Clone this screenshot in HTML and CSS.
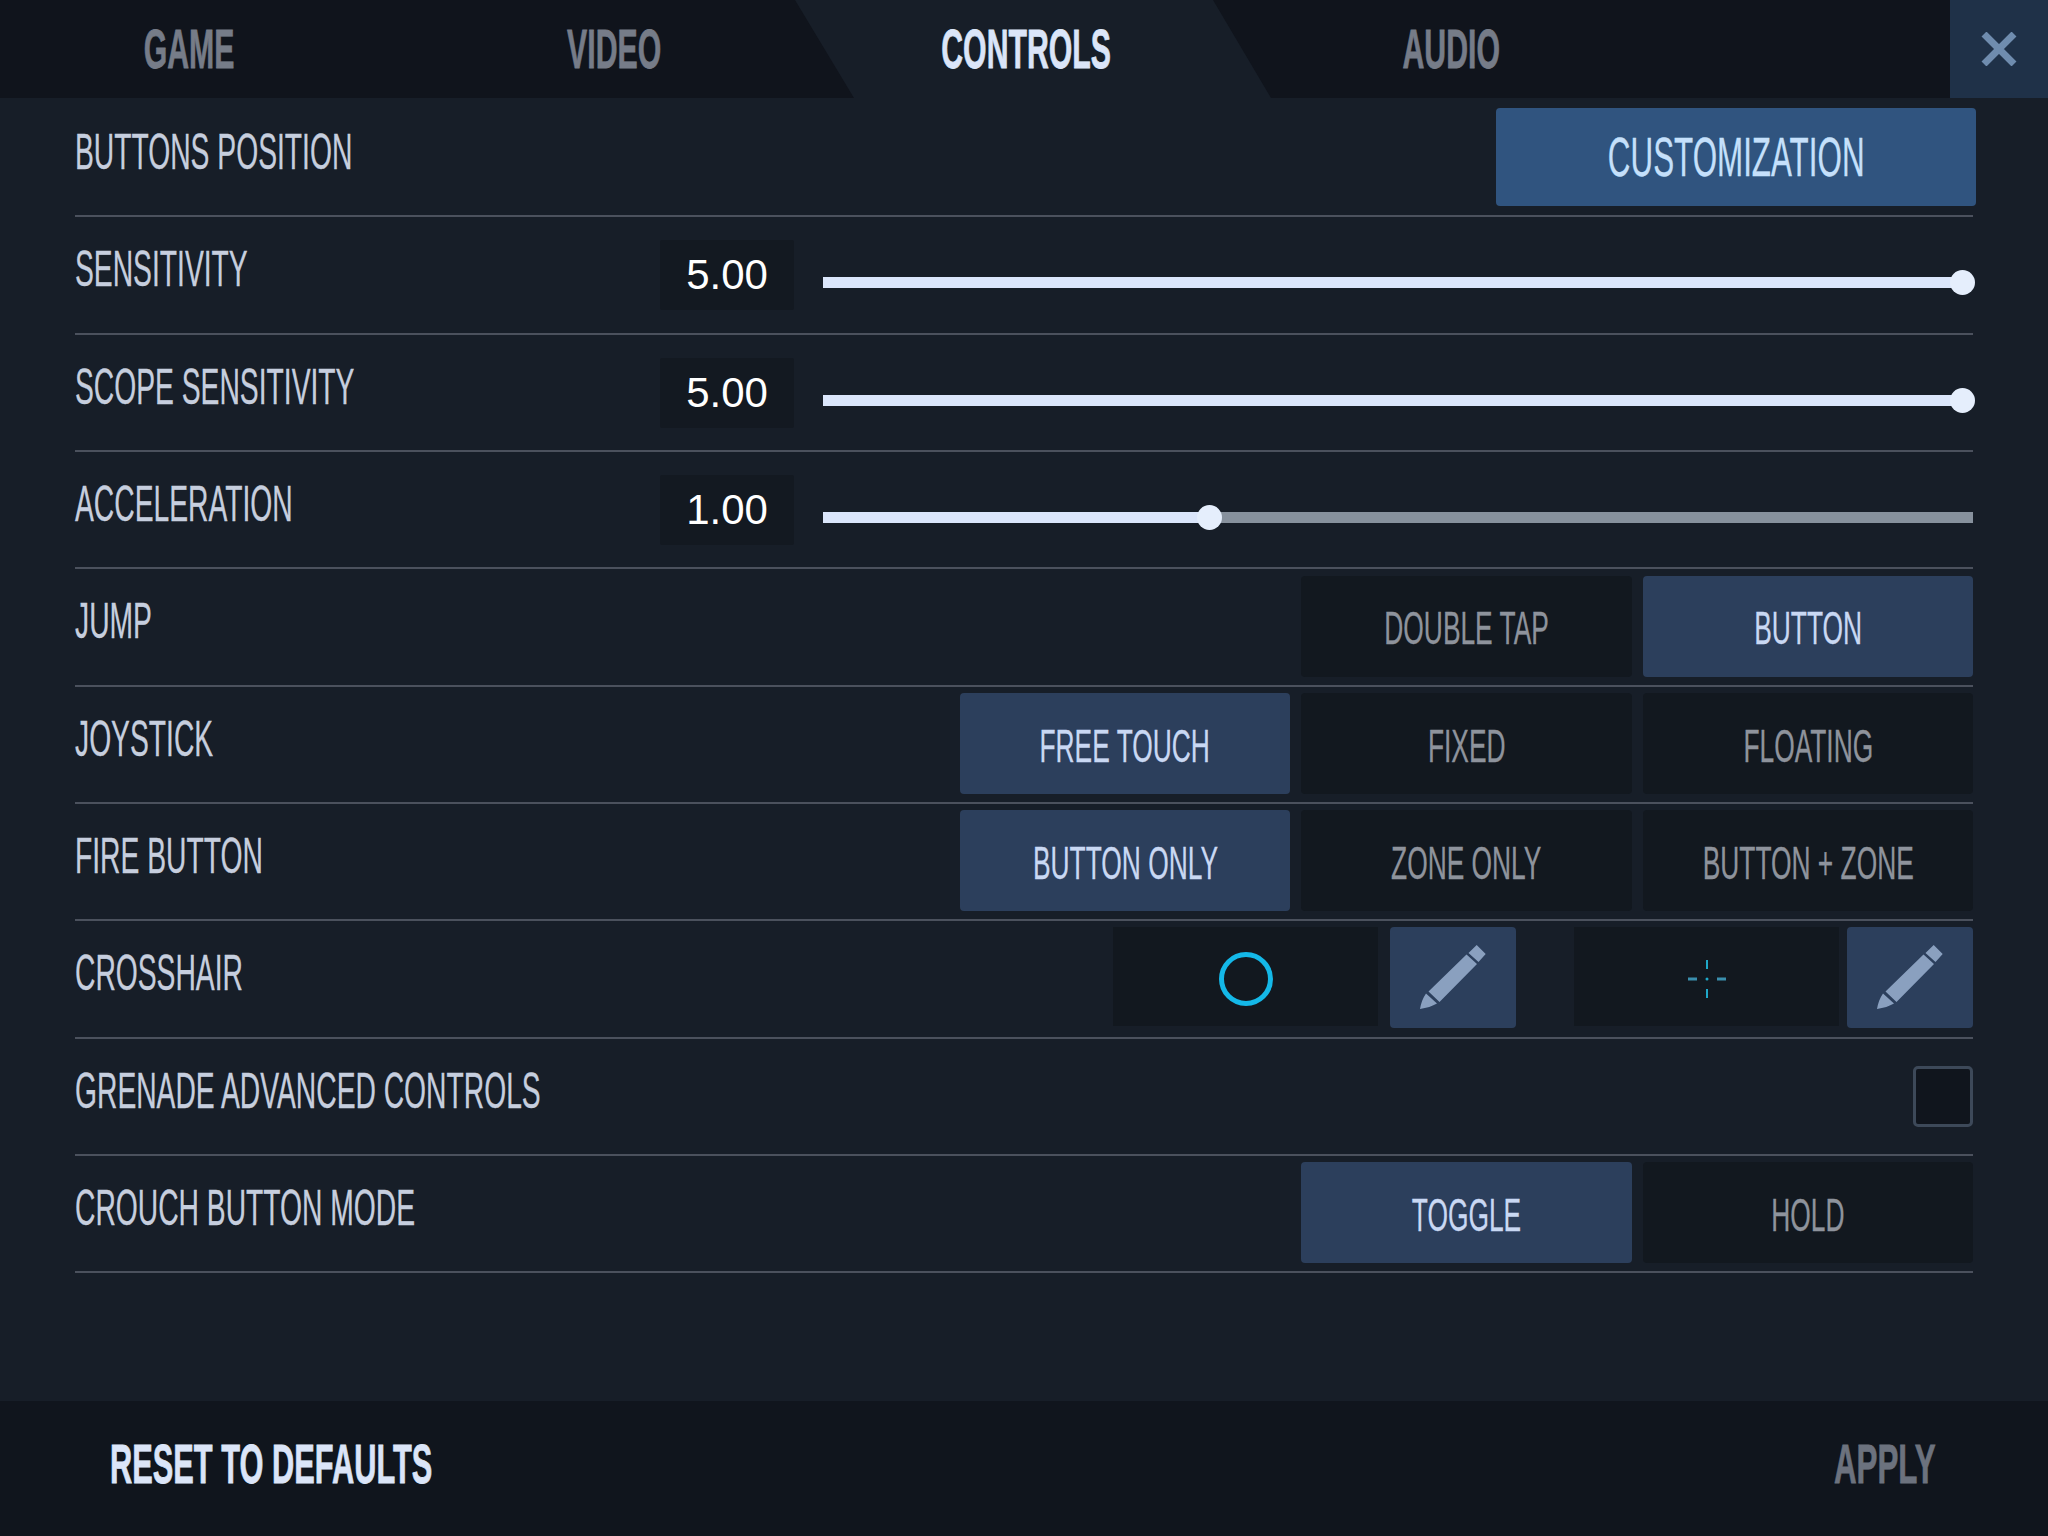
FILE: index.html
```html
<!DOCTYPE html>
<html lang="en">
<head>
<meta charset="utf-8">
<title>Controls settings</title>
<link rel="stylesheet" href="styles.css">
</head>
<body>
<div class="app">
  <header class="tabs">
    <div class="tab tab-game"><span class="tab-text">GAME</span></div>
    <div class="tab tab-video"><span class="tab-text">VIDEO</span></div>
    <div class="tab tab-active"><span class="tab-text">CONTROLS</span></div>
    <div class="tab tab-audio"><span class="tab-text">AUDIO</span></div>
    <div class="close">
      <svg class="close-icon" viewBox="0 0 36 34"><path d="M3 2 L33 32 M33 2 L3 32"/></svg>
    </div>
  </header>

  <main class="list">
    <div class="row">
      <div class="label"><span class="label-text">BUTTONS POSITION</span></div>
      <div class="custom"><span class="custom-text">CUSTOMIZATION</span></div>
    </div>

    <div class="row">
      <div class="label label-slider"><span class="label-text">SENSITIVITY</span></div>
      <div class="value">5.00</div>
      <div class="slider"><div class="fill fill-full" style="width:100%"><span class="thumb"></span></div></div>
    </div>

    <div class="row">
      <div class="label label-slider"><span class="label-text">SCOPE SENSITIVITY</span></div>
      <div class="value">5.00</div>
      <div class="slider"><div class="fill fill-full" style="width:100%"><span class="thumb"></span></div></div>
    </div>

    <div class="row">
      <div class="label label-slider"><span class="label-text">ACCELERATION</span></div>
      <div class="value">1.00</div>
      <div class="slider"><div class="fill" style="width:33.6%"><span class="thumb"></span></div></div>
    </div>

    <div class="row">
      <div class="label"><span class="label-text">JUMP</span></div>
      <div class="options">
        <div class="opt"><span class="opt-text">DOUBLE TAP</span></div>
        <div class="opt opt-on"><span class="opt-text">BUTTON</span></div>
      </div>
    </div>

    <div class="row">
      <div class="label"><span class="label-text">JOYSTICK</span></div>
      <div class="options">
        <div class="opt opt-on"><span class="opt-text">FREE TOUCH</span></div>
        <div class="opt"><span class="opt-text">FIXED</span></div>
        <div class="opt"><span class="opt-text">FLOATING</span></div>
      </div>
    </div>

    <div class="row">
      <div class="label"><span class="label-text">FIRE BUTTON</span></div>
      <div class="options">
        <div class="opt opt-on"><span class="opt-text">BUTTON ONLY</span></div>
        <div class="opt"><span class="opt-text">ZONE ONLY</span></div>
        <div class="opt"><span class="opt-text">BUTTON + ZONE</span></div>
      </div>
    </div>

    <div class="row">
      <div class="label"><span class="label-text">CROSSHAIR</span></div>
      <div class="cross-group">
        <div class="cross-pair">
          <div class="cross-cell">
            <svg class="cross-circle" viewBox="0 0 54 54"><circle cx="27" cy="27" r="24.5"/></svg>
          </div>
          <div class="pencil">
            <svg class="pencil-icon" viewBox="0 0 126 101"><path d="M86.7 18 L95.7 27 L88.5 35 L78.5 26 Z M76.5 27.5 L87 37 L49.5 75 L38.5 64.5 Z M36 66.5 L47 76.5 Q40 80.5 30 82 Q31.5 73 36 66.5 Z"/></svg>
          </div>
        </div>
        <div class="cross-pair cross-pair-tight">
          <div class="cross-cell">
            <svg class="cross-plus" viewBox="0 0 40 40"><path class="plus-v" d="M20 1 V10 M20 30 V39"/><path class="plus-h" d="M1 20 H10 M30 20 H39"/><circle class="plus-dot" cx="20" cy="20" r="1.5"/></svg>
          </div>
          <div class="pencil">
            <svg class="pencil-icon" viewBox="0 0 126 101"><path d="M86.7 18 L95.7 27 L88.5 35 L78.5 26 Z M76.5 27.5 L87 37 L49.5 75 L38.5 64.5 Z M36 66.5 L47 76.5 Q40 80.5 30 82 Q31.5 73 36 66.5 Z"/></svg>
          </div>
        </div>
      </div>
    </div>

    <div class="row">
      <div class="label"><span class="label-text">GRENADE ADVANCED CONTROLS</span></div>
      <div class="check"></div>
    </div>

    <div class="row">
      <div class="label"><span class="label-text">CROUCH BUTTON MODE</span></div>
      <div class="options">
        <div class="opt opt-on"><span class="opt-text">TOGGLE</span></div>
        <div class="opt"><span class="opt-text">HOLD</span></div>
      </div>
    </div>
  </main>

  <footer class="footer">
    <span class="foot-text foot-reset">RESET TO DEFAULTS</span>
    <span class="foot-text foot-apply">APPLY</span>
  </footer>
</div>
</body>
</html>
```
FILE: styles.css
```css
* { box-sizing: border-box; }
html, body { margin: 0; padding: 0; }
body {
  width: 2048px;
  height: 1536px;
  overflow: hidden;
  background: #171e28;
  font-family: "Liberation Sans", Arial, sans-serif;
}
.app {
  display: flex;
  flex-direction: column;
  width: 2048px;
  height: 1536px;
}

/* Tabs */
.tabs {
  display: flex;
  height: 98px;
  flex: none;
  background: #10141c;
}
.tab {
  display: flex;
  align-items: center;
  justify-content: center;
  height: 98px;
  flex: none;
  white-space: nowrap;
}
.tab-game { width: 378px; }
.tab-video { width: 473px; }
.tab-active {
  width: 476px;
  margin-left: -56px;
  padding-right: 13px;
  background: #171e28;
  clip-path: polygon(0 0, 418px 0, 476px 98px, 59px 98px);
}
.tab-audio { width: 360px; }
.tab-text {
  display: inline-block;
  font-size: 56px;
  font-weight: 700;
  line-height: 1;
  color: #767c88;
  transform: scaleX(.54);
  -webkit-text-stroke: .8px currentColor;
}
.tab-active .tab-text { color: #dbe5f8; }
.close {
  display: flex;
  align-items: center;
  justify-content: center;
  width: 98px;
  height: 98px;
  margin-left: auto;
  background: #1f3148;
}
.close-icon {
  width: 36px;
  height: 34px;
  fill: none;
  stroke: #6f8cae;
  stroke-width: 7;
}

/* Rows */
.list {
  flex: 1;
  margin: 0 75px;
  padding-top: 2px;
}
.row {
  display: flex;
  align-items: flex-start;
  height: 117.33px;
  border-bottom: 2px solid #4b515d;
}
.label {
  flex: 1;
  align-self: flex-start;
  margin-top: 27px;
  white-space: nowrap;
  line-height: 50px;
}
.label-slider { flex: 0 0 585px; }
.label-text {
  display: inline-block;
  font-size: 50px;
  color: #c6cede;
  transform: scaleX(.565);
  transform-origin: left center;
  -webkit-text-stroke: .3px currentColor;
}

.custom {
  display: flex;
  align-items: center;
  justify-content: center;
  width: 480px;
  height: 98px;
  margin-top: 8px;
  margin-right: -3px;
  border-radius: 4px;
  background: #30547f;
  white-space: nowrap;
}
.custom-text {
  display: inline-block;
  font-size: 56px;
  line-height: 1;
  color: #c5e0fb;
  transform: scaleX(.56);
  -webkit-text-stroke: .3px currentColor;
}

.value {
  display: flex;
  align-items: center;
  justify-content: center;
  width: 134px;
  height: 70px;
  margin-top: 23px;
  background: #131921;
  border-radius: 2px;
  font-size: 42px;
  color: #fff;
}
.slider {
  flex: 1;
  height: 11px;
  margin-top: 60px;
  margin-left: 29px;
  background: #87919d;
}
.fill {
  position: relative;
  height: 100%;
  background: #dbe6fb;
}
.thumb {
  position: absolute;
  top: -7px;
  right: -13px;
  width: 25px;
  height: 25px;
  border-radius: 50%;
  background: #e5eefc;
}
.fill-full .thumb { right: -2px; }

.options {
  display: flex;
  gap: 11px;
  margin-top: 6.5px;
}
.opt {
  display: flex;
  align-items: center;
  justify-content: center;
  width: 330.4px;
  height: 101px;
  padding-top: 4px;
  border-radius: 4px;
  background: #12181f;
  white-space: nowrap;
}
.opt-on { background: #2c3f5c; }
.opt-text {
  display: inline-block;
  font-size: 46px;
  line-height: 1;
  color: #8e939c;
  transform: scaleX(.573);
  -webkit-text-stroke: .3px currentColor;
}
.opt-on .opt-text { color: #c9d8f3; }

.cross-group {
  display: flex;
  gap: 58px;
  margin-top: 6px;
}
.cross-pair {
  display: flex;
  gap: 12px;
}
.cross-pair-tight { gap: 8px; }
.cross-cell {
  display: flex;
  align-items: center;
  justify-content: center;
  width: 265px;
  height: 99px;
  background: #12181f;
}
.cross-circle {
  width: 54px;
  height: 54px;
  margin-top: 4px;
  fill: none;
  stroke: #14b8e8;
  stroke-width: 5;
}
.cross-plus {
  width: 40px;
  height: 40px;
  margin-top: 4px;
}
.plus-v { fill: none; stroke: #1fa8c8; stroke-width: 2; }
.plus-h { fill: none; stroke: #3a8fae; stroke-width: 3; }
.plus-dot { fill: #1fa8c8; }
.pencil {
  width: 126px;
  height: 101px;
  border-radius: 4px;
  background: #2c3f5c;
}
.pencil-icon {
  display: block;
  width: 126px;
  height: 101px;
  fill: #8aa0bf;
}

.check {
  width: 60px;
  height: 61px;
  margin-top: 27px;
  border: 3px solid #3d4959;
  border-radius: 5px;
  background: #10151d;
}

/* Footer */
.footer {
  display: flex;
  align-items: center;
  justify-content: space-between;
  height: 135px;
  flex: none;
  padding: 0 112px 10px 110px;
  background: #10151d;
}
.foot-text {
  display: inline-block;
  font-size: 56px;
  font-weight: 700;
  line-height: 1;
  white-space: nowrap;
  -webkit-text-stroke: .8px currentColor;
}
.foot-reset {
  color: #dbe5f8;
  transform: scaleX(.55);
  transform-origin: left center;
}
.foot-apply {
  color: #6c727e;
  transform: scaleX(.56);
  transform-origin: right center;
}
```
